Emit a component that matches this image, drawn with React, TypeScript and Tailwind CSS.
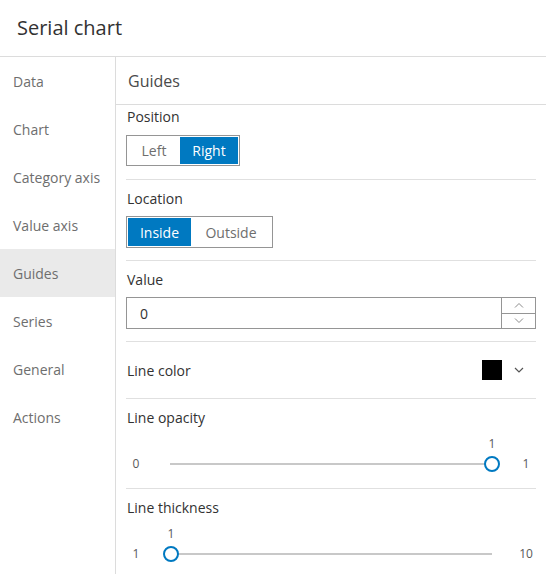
import React from "react";

const font = { fontFamily: '"Open Sans", "Liberation Sans", sans-serif' };

function Divider() {
  return <div className="h-px bg-[#e0e0e0]" />;
}

function Slider({ min, max, value, pos }: { min: string; max: string; value: string; pos: number }) {
  return (
    <div className="relative h-[60px]">
      <div className="absolute left-[-5px] w-[30px] text-center top-[29px] text-[12px] leading-[14px] text-[#595959]">{min}</div>
      <div className="absolute left-[385px] w-[30px] text-center top-[29px] text-[12px] leading-[14px] text-[#595959]">{max}</div>
      <div className="absolute left-[44px] w-[322px] top-[35px] h-[2px] bg-[#c8c8c8]" />
      <div
        className="absolute top-[9px] text-[12px] leading-[14px] text-[#595959] -translate-x-1/2"
        style={{ left: 45 + pos * 321 }}
      >
        {value}
      </div>
      <div
        className="absolute top-[28px] w-[16px] h-[16px] rounded-full border-2 border-[#0079c1] bg-white -translate-x-1/2"
        style={{ left: 45 + pos * 321 }}
      />
    </div>
  );
}

export default function App() {
  const nav = ["Data", "Chart", "Category axis", "Value axis", "Guides", "Series", "General", "Actions"];
  return (
    <div className="w-[546px] h-[574px] bg-white overflow-hidden flex flex-col" style={font}>
      <div className="h-[57px] shrink-0 border-b border-[#dcdcdc] flex items-center pl-[17px] text-[20px] text-[#323232]">
        Serial chart
      </div>
      <div className="flex flex-1 min-h-0 overflow-hidden">
        <div className="w-[116px] border-r border-[#dcdcdc] shrink-0">
          {nav.map((n) => (
            <div
              key={n}
              className={`h-[48px] flex items-center pl-[13px] text-[14px] text-[#6e6e6e] ${n === "Guides" ? "bg-[#eaeaea] text-[#4a4a4a]" : ""}`}
            >
              {n}
            </div>
          ))}
        </div>
        <div className="flex-1 flex flex-col">
          <div className="h-[48px] shrink-0 border-b border-[#dcdcdc] flex items-center pl-[12px] text-[16px] font-medium text-[#4a4a4a]">
            Guides
          </div>
          <div className="pl-[10px] pr-[10px] text-[14px] text-[#323232]">
            <div className="pt-[2px] pb-[13px]">
              <div className="leading-[20px] pl-[1px]">Position</div>
              <div className="mt-[8px] inline-flex border border-[#959595] p-px">
                <div className="w-[52px] h-[27px] flex items-center justify-center text-[#6e6e6e]">Left</div>
                <div className="w-[58px] h-[27px] flex items-center justify-center bg-[#0079c1] text-white">Right</div>
              </div>
            </div>
            <Divider />
            <div className="pt-[9px] pb-[12px]">
              <div className="leading-[20px] pl-[1px]">Location</div>
              <div className="mt-[7px] inline-flex border border-[#959595] p-px">
                <div className="w-[63px] h-[28px] flex items-center justify-center bg-[#0079c1] text-white">Inside</div>
                <div className="w-[80px] h-[28px] flex items-center justify-center text-[#6e6e6e]">Outside</div>
              </div>
            </div>
            <Divider />
            <div className="pt-[9px] pb-[12px]">
              <div className="leading-[20px] pl-[1px]">Value</div>
              <div className="mt-[7px] flex h-[32px] border border-[#959595]">
                <div className="flex-1 flex items-center pl-[13px] text-[#323232]">0</div>
                <div className="w-[34px] border-l border-[#959595] flex flex-col">
                  <div className="flex-1 border-b border-[#959595] flex items-center justify-center">
                    <svg width="10" height="6" viewBox="0 0 10 6" fill="none" stroke="#8a8a8a" strokeWidth="1">
                      <path d="M1 5.5 L5 1.5 L9 5.5" />
                    </svg>
                  </div>
                  <div className="flex-1 flex items-center justify-center">
                    <svg width="10" height="6" viewBox="0 0 10 6" fill="none" stroke="#8a8a8a" strokeWidth="1">
                      <path d="M1 0.5 L5 4.5 L9 0.5" />
                    </svg>
                  </div>
                </div>
              </div>
            </div>
            <Divider />
            <div className="h-[56px] flex items-center">
              <div className="flex-1 pl-[1px]">Line color</div>
              <div className="w-[20px] h-[20px] bg-black" />
              <div className="w-[34px] flex justify-center">
                <svg width="10" height="6" viewBox="0 0 10 6" fill="none" stroke="#555" strokeWidth="1.2">
                  <path d="M1 1 L5 5 L9 1" />
                </svg>
              </div>
            </div>
            <Divider />
            <div className="pt-[9px]">
              <div className="leading-[20px] pl-[1px]">Line opacity</div>
              <Slider min="0" max="1" value="1" pos={1} />
            </div>
            <Divider />
            <div className="pt-[9px]">
              <div className="leading-[20px] pl-[1px]">Line thickness</div>
              <Slider min="1" max="10" value="1" pos={0} />
            </div>
          </div>
        </div>
      </div>
    </div>
  );
}
